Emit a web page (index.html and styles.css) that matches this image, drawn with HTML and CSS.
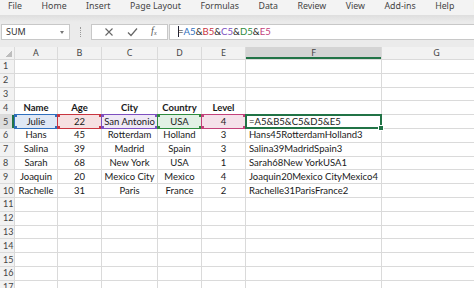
FILE: index.html
```html
<!DOCTYPE html>
<html>
<head lang="en">
	<meta charset="utf-8">
	<title>Concatenate</title>
	<link rel="stylesheet" href="styles.css">
</head>
<body>
	<div class="menu">
		<span>File</span><span>Home</span><span>Insert</span><span>Page Layout</span><span>Formulas</span><span>Data</span><span>Review</span><span>View</span><span>Add-ins</span><span>Help</span><span>B</span>
	</div>
	<div class="toolbar">
		<div class="namebox">SUM<span class="caret"></span></div>
		<div class="grip"></div>
		<div class="btns">
			<svg width="10" height="10" viewBox="0 0 10 10"><path d="M1.5 1.5l7 7M8.5 1.5l-7 7" stroke="#666" stroke-width="1.1" fill="none"/></svg>
			<svg width="11" height="10" viewBox="0 0 11 10"><path d="M1 5.5l3 3 6-7" stroke="#666" stroke-width="1.2" fill="none"/></svg>
			<span class="fx"><i>f</i><sub>x</sub></span>
		</div>
		<div class="formula"><span class="cursor"></span>=<span class="kb">A5</span>&amp;<span class="kr">B5</span>&amp;<span class="kp">C5</span>&amp;<span class="kg">D5</span>&amp;<span class="km">E5</span></div>
	</div>
	<!--表格-->
	<div class="sheet">
		<div class="h corner"></div><div class="h">A</div><div class="h">B</div><div class="h">C</div><div class="h">D</div><div class="h">E</div><div class="h sel">F</div><div class="h">G</div>
		<div class="n">1</div><div></div><div></div><div></div><div></div><div></div><div></div><div></div>
		<div class="n">2</div><div></div><div></div><div></div><div></div><div></div><div></div><div></div>
		<div class="n">3</div><div></div><div></div><div></div><div></div><div></div><div></div><div></div>
		<div class="n">4</div><div class="b">Name</div><div class="b">Age</div><div class="b">City</div><div class="b">Country</div><div class="b">Level</div><div></div><div></div>
		<div class="n nsel">5</div><div class="ra">Julie</div><div class="rb">22</div><div class="rc">San Antonio</div><div class="rd">USA</div><div class="re">4</div><div class="l act">=A5&amp;B5&amp;C5&amp;D5&amp;E5</div><div></div>
		<div class="n">6</div><div>Hans</div><div>45</div><div>Rotterdam</div><div>Holland</div><div>3</div><div class="l">Hans45RotterdamHolland3</div><div></div>
		<div class="n">7</div><div>Salina</div><div>39</div><div>Madrid</div><div>Spain</div><div>3</div><div class="l">Salina39MadridSpain3</div><div></div>
		<div class="n">8</div><div>Sarah</div><div>68</div><div>New York</div><div>USA</div><div>1</div><div class="l">Sarah68New YorkUSA1</div><div></div>
		<div class="n">9</div><div>Joaquin</div><div>20</div><div>Mexico City</div><div>Mexico</div><div>4</div><div class="l">Joaquin20Mexico CityMexico4</div><div></div>
		<div class="n">10</div><div>Rachelle</div><div>31</div><div>Paris</div><div>France</div><div>2</div><div class="l">Rachelle31ParisFrance2</div><div></div>
		<div class="n">11</div><div></div><div></div><div></div><div></div><div></div><div></div><div></div>
		<div class="n">12</div><div></div><div></div><div></div><div></div><div></div><div></div><div></div>
		<div class="n">13</div><div></div><div></div><div></div><div></div><div></div><div></div><div></div>
		<div class="n">14</div><div></div><div></div><div></div><div></div><div></div><div></div><div></div>
		<div class="n">15</div><div></div><div></div><div></div><div></div><div></div><div></div><div></div>
		<div class="n">16</div><div></div><div></div><div></div><div></div><div></div><div></div><div></div>
		<div class="n">17</div><div></div><div></div><div></div><div></div><div></div><div></div><div></div>
	</div>
</body>
</html>
```

FILE: styles.css
```css
body{
	margin: 0;
	width: 474px;
	height: 288px;
	overflow: hidden;
	background: #fff;
	font-family: "Noto Sans", sans-serif;
}
.menu{
	height: 15px;
	background: #f3f3f3;
	display: flex;
	gap: 19.5px;
	padding-left: 8px;
	font-size: 8.8px;
	line-height: 13px;
	color: #444;
	white-space: nowrap;
	overflow: hidden;
}
.toolbar{
	height: 32px;
	background: linear-gradient(#dedede, #ebebeb 7px);
	display: flex;
	align-items: flex-start;
	padding-top: 9px;
	box-sizing: border-box;
}
.namebox{
	margin-left: 1px;
	width: 69px;
	height: 16px;
	box-sizing: border-box;
	border: 1px solid #c8c8c8;
	background: #fff;
	font-size: 9px;
	line-height: 14px;
	padding-left: 4px;
	color: #333;
	display: flex;
	justify-content: space-between;
	align-items: center;
}
.caret{
	width: 0;
	height: 0;
	border-left: 2.5px solid transparent;
	border-right: 2.5px solid transparent;
	border-top: 3px solid #777;
	margin-right: 5px;
}
.grip{
	margin: 3px 0 0 10px;
	width: 0;
	height: 10px;
	border-left: 1px dotted #999;
}
.btns{
	margin-left: 10px;
	width: 77px;
	height: 16px;
	box-sizing: border-box;
	border: 1px solid #c8c8c8;
	background: #fff;
	display: flex;
	align-items: center;
	justify-content: space-around;
	padding: 0 4px 0 6px;
}
.fx{
	font-family: "Liberation Serif", serif;
	font-size: 10px;
	color: #555;
	line-height: 10px;
}
.fx sub{
	font-size: 6px;
	font-style: italic;
	vertical-align: -1px;
}
.formula{
	margin-left: 1px;
	flex: 1;
	height: 16px;
	box-sizing: border-box;
	border: 1px solid #c8c8c8;
	border-right: none;
	background: #fff;
	padding-left: 8px;
	font-family: Lato, sans-serif;
	font-size: 9.6px;
	line-height: 14px;
	color: #222;
}
.cursor{
	display: inline-block;
	width: 1px;
	height: 11px;
	background: #223;
	vertical-align: -2px;
	margin-right: -1px;
}
.kb{ color: #2f6fbd; }
.kr{ color: #c8343f; }
.kp{ color: #7d4fbf; }
.kg{ color: #2e8b3e; }
.km{ color: #c2407a; }

.sheet{
	display: grid;
	grid-template-columns: 14px 42px 43px 55px 43px 43px 135px 109px;
	grid-template-rows: 12px repeat(17, 12.8px);
	gap: 1px;
	background: #dadada;
	width: 492px;
	font-family: Lato, sans-serif;
	font-size: 9.5px;
	color: #1a1a1a;
}
.sheet > div{
	background: #fff;
	display: flex;
	align-items: center;
	justify-content: center;
	white-space: nowrap;
	line-height: 12px;
}
.sheet > .h{
	background: #f2f2f2;
	color: #444;
	font-size: 9px;
	font-family: "Noto Sans", sans-serif;
}
.sheet > .sel{
	background: #d4d4d4;
	box-shadow: inset 0 -2px #217346;
}
.sheet > .corner{
	background: linear-gradient(135deg, transparent 50%, #bdbdbd 50%) right 2px bottom 2px / 7px 7px no-repeat, #f2f2f2;
}
.sheet > .n{
	background: #f2f2f2;
	color: #444;
	font-size: 9px;
	justify-content: flex-start;
	padding-left: 3px;
}
.sheet > .nsel{
	background: #dcdcdc;
	box-shadow: inset -2px 0 #217346;
}
.sheet > .b{
	font-weight: bold;
}
.sheet > .l{
	justify-content: flex-start;
	padding-left: 3px;
}
.ra, .rb, .rc, .rd, .re{
	outline: 1px solid;
	background-size: 2px 2px !important;
	background-repeat: no-repeat !important;
	background-position: left top, right top, left bottom, right bottom !important;
}
.sheet > .ra{
	outline-color: #2f6fbd;
	background: linear-gradient(#2f6fbd,#2f6fbd), linear-gradient(#2f6fbd,#2f6fbd), linear-gradient(#2f6fbd,#2f6fbd), linear-gradient(#2f6fbd,#2f6fbd), #dfe8f5;
}
.sheet > .rb{
	outline-color: #c8343f;
	background: linear-gradient(#c8343f,#c8343f), linear-gradient(#c8343f,#c8343f), linear-gradient(#c8343f,#c8343f), linear-gradient(#c8343f,#c8343f), #f6e0e1;
}
.sheet > .rc{
	outline-color: #7d4fbf;
	background: linear-gradient(#7d4fbf,#7d4fbf), linear-gradient(#7d4fbf,#7d4fbf), linear-gradient(#7d4fbf,#7d4fbf), linear-gradient(#7d4fbf,#7d4fbf), #efe9f6;
}
.sheet > .rd{
	outline-color: #2e8b3e;
	background: linear-gradient(#2e8b3e,#2e8b3e), linear-gradient(#2e8b3e,#2e8b3e), linear-gradient(#2e8b3e,#2e8b3e), linear-gradient(#2e8b3e,#2e8b3e), #e2f1e5;
}
.sheet > .re{
	outline-color: #c2407a;
	background: linear-gradient(#c2407a,#c2407a), linear-gradient(#c2407a,#c2407a), linear-gradient(#c2407a,#c2407a), linear-gradient(#c2407a,#c2407a), #f5e1ea;
}
.sheet > .act{
	outline: 2px solid #217346;
	outline-offset: -1px;
	position: relative;
}
.act:after{
	content: "";
	position: absolute;
	right: -3px;
	bottom: -3px;
	width: 4px;
	height: 4px;
	background: #217346;
	border: 1px solid #fff;
}
```
